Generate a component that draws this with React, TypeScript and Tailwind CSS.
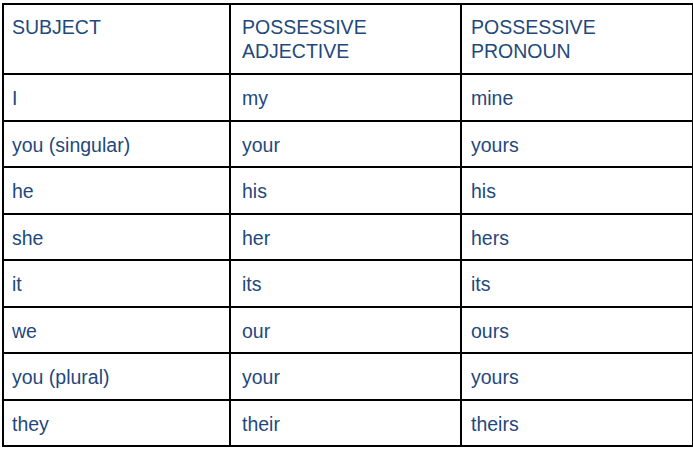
import React from "react";

const rows: [string, string, string][] = [
  ["I", "my", "mine"],
  ["you (singular)", "your", "yours"],
  ["he", "his", "his"],
  ["she", "her", "hers"],
  ["it", "its", "its"],
  ["we", "our", "ours"],
  ["you (plural)", "your", "yours"],
  ["they", "their", "theirs"],
];

export default function App() {
  return (
    <div className="w-[693px] h-[449px] bg-white pl-[2px] pt-[3px]" style={{ fontFamily: '"Liberation Sans", Arial, sans-serif' }}>
      <table className="border-collapse table-fixed w-[690px] text-[19.5px] leading-[24px] text-[#1f497d]">
        <colgroup>
          <col className="w-[227px]" />
          <col className="w-[231px]" />
          <col className="w-[232px]" />
        </colgroup>
        <tbody>
          <tr className="h-[70px]">
            <td className="border-2 border-black align-top pl-[8px] pt-[10px]">SUBJECT</td>
            <td className="border-2 border-black align-top pl-[11px] pt-[10px]">POSSESSIVE<br />ADJECTIVE</td>
            <td className="border-2 border-black align-top pl-[9px] pt-[10px]">POSSESSIVE<br />PRONOUN</td>
          </tr>
          {rows.map((r, i) => (
            <tr key={i} className="h-[46.5px]">
              <td className="border-2 border-black align-top pl-[8px] pt-[11px]">{r[0]}</td>
              <td className="border-2 border-black align-top pl-[11px] pt-[11px]">{r[1]}</td>
              <td className="border-2 border-black align-top pl-[9px] pt-[11px]">{r[2]}</td>
            </tr>
          ))}
        </tbody>
      </table>
    </div>
  );
}
